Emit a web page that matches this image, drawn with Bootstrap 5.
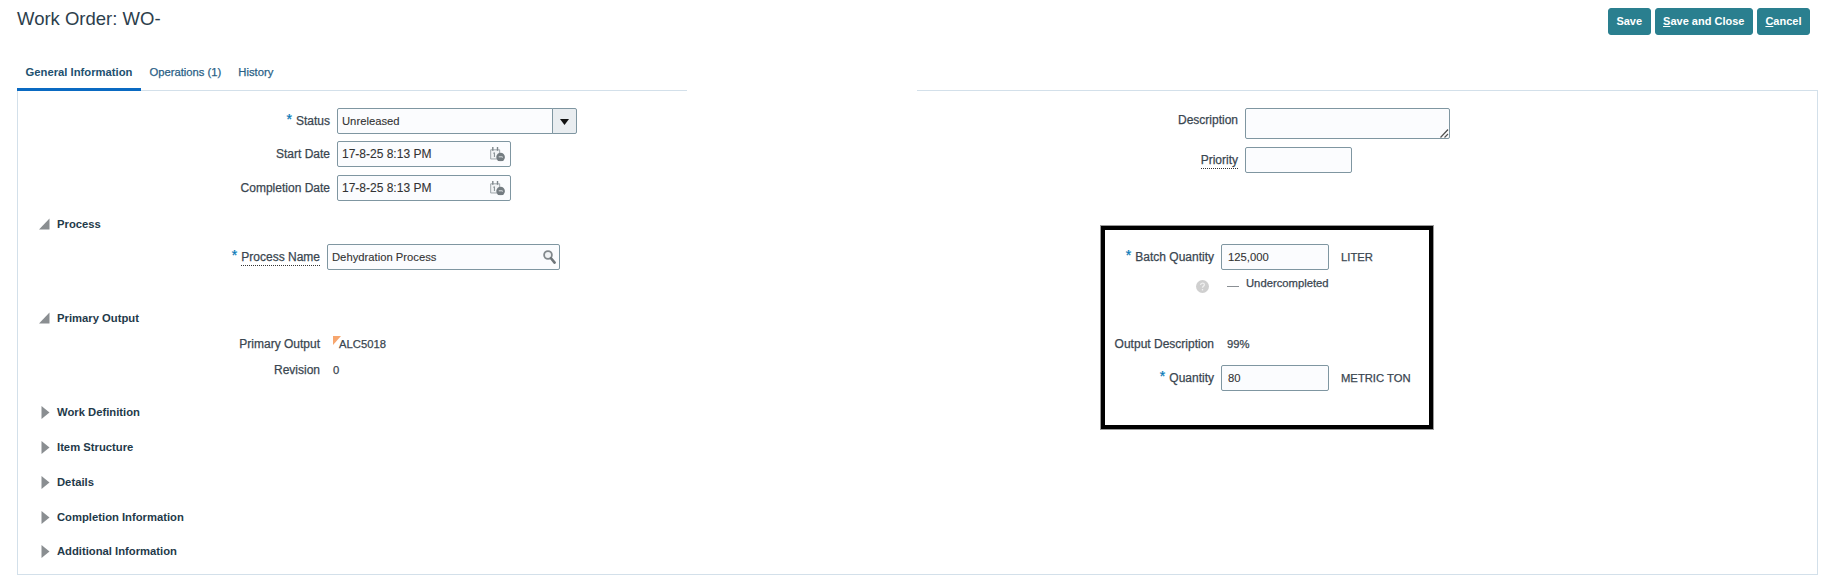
<!DOCTYPE html>
<html lang="en">
<head>
    <meta charset="UTF-8">
    <title>Work Order</title>
    <link href="https://cdn.jsdelivr.net/npm/bootstrap@5.3.3/dist/css/bootstrap.min.css" rel="stylesheet">
    <style>
        body {
            background: #fff;
            font-family: "Liberation Sans", Arial, sans-serif;
            font-size: 12px;
            color: #3a4650;
            -webkit-text-stroke: 0.25px;
        }

        .page-head {
            height: 54px;
            padding: 8px 27px 0 17px;
        }

        .page-title {
            font-size: 18.5px;
            font-weight: 400;
            line-height: 22px;
            margin: 0;
            color: #2c3e4c;
            -webkit-text-stroke: 0;
        }

        .act-btn {
            background: #2a7f8f;
            border: 1px solid #2a7f8f;
            border-radius: 3px;
            color: #fff;
            font-size: 11px;
            font-weight: 700;
            height: 27px;
            padding: 0 7.5px;
            -webkit-text-stroke: 0;
        }

        .act-btn:hover {
            background: #236d7b;
            color: #fff;
        }

        .form-wrap {
            margin: 0 19px 0 17px;
        }

        .tab-bar {
            height: 37px;
        }

        .tab-line {
            border-bottom: 1px solid #d3e0ea;
        }

        .tab-left {
            width: 670px;
        }

        .tab-gap {
            width: 230px;
        }

        .tab-right {
            flex: 1;
        }

        .tab-link {
            color: #2a5f86;
            font-size: 11.25px;
            padding: 0 8.5px;
            height: 37px;
            line-height: 36px;
        }

        .tab-link.on {
            color: #22506f;
            font-weight: 700;
            border-bottom: 3px solid #0a6ac2;
            margin-bottom: -1px;
            -webkit-text-stroke: 0;
        }

        .form-panel {
            border: 1px solid #d3e0ea;
            border-top: 0;
            padding: 17px 0 13px;
        }

        .col-left {
            width: 900px;
        }

        .frow {
            display: flex;
            align-items: center;
            gap: 7px;
        }

        .flabel {
            text-align: right;
            flex: none;
        }

        .w-top {
            width: 312px;
        }

        .w-proc {
            width: 302px;
        }

        .w-desc {
            width: 320px;
        }

        .w-box {
            width: 109px;
        }

        .req {
            color: #0a7ab8;
            font-size: 14px;
            line-height: 1;
            margin-right: 4px;
            vertical-align: 1px;
        }

        .dotted {
            border-bottom: 1px dotted #333;
            padding-bottom: 1px;
        }

        .fld {
            height: 26px;
            font-size: 11.25px;
            color: #333;
            background: #fbfcfe;
            border: 1px solid #7f96a1;
            border-radius: 2px;
            padding: 0 4px;
            box-shadow: none;
            -webkit-text-stroke: 0.1px;
        }

        .fld-date {
            width: 174px;
            font-size: 12px;
            padding-right: 26px;
        }

        .drop-btn {
            width: 25px;
            height: 26px;
            padding: 0;
            background: #e9edf0;
            border: 1px solid #7f96a1;
            border-radius: 0 2px 2px 0;
            margin-left: -1px;
        }

        .status-grp {
            width: 240px;
            flex-wrap: nowrap;
        }

        .ico-over {
            position: absolute;
            top: 50%;
            transform: translateY(-50%);
        }

        .ico-date {
            right: 6px;
        }

        .ico-find {
            right: 4px;
        }

        .ico-grip {
            position: absolute;
            right: 1px;
            bottom: 1px;
            pointer-events: none;
        }

        textarea.fld-area {
            width: 205px;
            height: 31px;
            min-height: 31px;
            padding: 4px;
        }

        .desc-lbl {
            margin-top: 3px;
        }

        .fld-search {
            width: 233px;
            padding-right: 24px;
        }

        .fld-pri {
            width: 107px;
        }

        .fld-qty {
            width: 108px;
            padding: 0 6px;
        }

        .unit {
            font-size: 11.25px;
            margin-left: 5px;
        }

        .sec-head {
            height: 20px;
            display: flex;
            align-items: center;
            color: #1f3a4a;
            font-size: 11.25px;
            font-weight: 700;
            padding-left: 21px;
            -webkit-text-stroke: 0;
        }

        .sec-ico {
            width: 18px;
            flex: none;
        }

        .gap-7 {
            margin-top: 7px;
        }

        .gap-8 {
            margin-top: 8px;
        }

        .gap-10 {
            margin-top: 10px;
        }

        .gap-11 {
            margin-top: 11px;
        }

        .h-1 {
            margin-top: 13px;
        }

        .h-2 {
            margin-top: 38px;
        }

        .h-3 {
            margin-top: 22px;
        }

        .h-4 {
            margin-top: 15px;
        }

        .h-5 {
            margin-top: 14px;
        }

        .read-row {
            height: 20px;
            margin-top: 6px;
        }

        .read-far {
            margin-top: 38px;
        }

        .read-val {
            font-size: 11.25px;
            margin-left: 6px;
        }

        .flag {
            margin: -8px -2px 0 0;
            flex: none;
        }

        .mark-box {
            border: 5px solid #000;
            margin: 52px 0 0 182px;
            width: 334px;
            padding: 14px 0 34px;
            outline: 1px solid #999;
            outline-offset: -1px;
        }

        .note-row {
            height: 20px;
            margin-top: 6px;
        }

        .note-ico {
            padding-right: 5px;
        }

        .dash {
            width: 12px;
            height: 1px;
            background: #8a8f94;
            margin-right: 7px;
            flex: none;
        }

        .note-txt {
            font-size: 11.25px;
            margin-top: -6px;
        }
    </style>
</head>

<body>
    <div class="page-head d-flex justify-content-between align-items-start">
        <h1 class="page-title">Work Order: WO-</h1>
        <div class="d-flex gap-1">
            <button class="btn act-btn">Save</button>
            <button class="btn act-btn"><u>S</u>ave and Close</button>
            <button class="btn act-btn"><u>C</u>ancel</button>
        </div>
    </div>

    <div class="form-wrap">
        <div class="tab-bar d-flex">
            <div class="tab-line tab-left nav">
                <a class="nav-link tab-link on" href="#">General Information</a>
                <a class="nav-link tab-link" href="#">Operations (1)</a>
                <a class="nav-link tab-link" href="#">History</a>
            </div>
            <div class="tab-gap"></div>
            <div class="tab-line tab-right"></div>
        </div>

        <div class="form-panel d-flex">
            <div class="col-left">
                <div class="frow">
                    <div class="flabel w-top"><span class="req">*</span>Status</div>
                    <div class="input-group status-grp">
                        <input class="form-control fld" value="Unreleased">
                        <button class="btn drop-btn" type="button">
                            <svg width="9" height="6" viewBox="0 0 9 6"><path d="M0 0h9L4.5 6z" fill="#111"/></svg>
                        </button>
                    </div>
                </div>
                <div class="frow gap-7">
                    <div class="flabel w-top">Start Date</div>
                    <div class="position-relative">
                        <input class="form-control fld fld-date" value="17-8-25 8:13 PM">
                        <svg class="ico-over ico-date" width="15" height="15" viewBox="0 0 16 16"><use href="#cal-clock"/></svg>
                    </div>
                </div>
                <div class="frow gap-8">
                    <div class="flabel w-top">Completion Date</div>
                    <div class="position-relative">
                        <input class="form-control fld fld-date" value="17-8-25 8:13 PM">
                        <svg class="ico-over ico-date" width="15" height="15" viewBox="0 0 16 16"><use href="#cal-clock"/></svg>
                    </div>
                </div>

                <div class="sec-head h-1">
                    <svg class="sec-ico" width="18" height="12" viewBox="0 0 18 12"><path d="M0 11.5L10.5 .5v11z" fill="#8a8e91"/></svg>
                    <span>Process</span>
                </div>
                <div class="frow gap-10">
                    <div class="flabel w-proc"><span class="req">*</span><span class="dotted">Process Name</span></div>
                    <div class="position-relative">
                        <input class="form-control fld fld-search" value="Dehydration Process">
                        <svg class="ico-over ico-find" width="13" height="14" viewBox="0 0 13 14">
                            <circle cx="5" cy="5" r="3.9" fill="#f1f3f5" stroke="#83898d" stroke-width="1.8"/>
                            <path d="M8 8.2l3.6 4.4" stroke="#6f767a" stroke-width="2.6" stroke-linecap="round"/>
                        </svg>
                    </div>
                </div>

                <div class="sec-head h-2">
                    <svg class="sec-ico" width="18" height="12" viewBox="0 0 18 12"><path d="M0 11.5L10.5 .5v11z" fill="#8a8e91"/></svg>
                    <span>Primary Output</span>
                </div>
                <div class="frow read-row">
                    <div class="flabel w-proc">Primary Output</div>
                    <div class="d-flex align-items-center read-val">
                        <svg class="flag" width="8" height="9" viewBox="0 0 8 9"><path d="M0 0h8L0 9z" fill="#f7a66e"/></svg>
                        <span>ALC5018</span>
                    </div>
                </div>
                <div class="frow read-row">
                    <div class="flabel w-proc">Revision</div>
                    <span class="read-val">0</span>
                </div>

                <div class="sec-head h-3"><svg class="sec-ico" width="18" height="13" viewBox="0 0 18 13"><path d="M2.5 0l8 6.5-8 6.5z" fill="#8a8e91"/></svg><span>Work Definition</span></div>
                <div class="sec-head h-4"><svg class="sec-ico" width="18" height="13" viewBox="0 0 18 13"><path d="M2.5 0l8 6.5-8 6.5z" fill="#8a8e91"/></svg><span>Item Structure</span></div>
                <div class="sec-head h-4"><svg class="sec-ico" width="18" height="13" viewBox="0 0 18 13"><path d="M2.5 0l8 6.5-8 6.5z" fill="#8a8e91"/></svg><span>Details</span></div>
                <div class="sec-head h-4"><svg class="sec-ico" width="18" height="13" viewBox="0 0 18 13"><path d="M2.5 0l8 6.5-8 6.5z" fill="#8a8e91"/></svg><span>Completion Information</span></div>
                <div class="sec-head h-5"><svg class="sec-ico" width="18" height="13" viewBox="0 0 18 13"><path d="M2.5 0l8 6.5-8 6.5z" fill="#8a8e91"/></svg><span>Additional Information</span></div>
            </div>

            <div class="flex-grow-1">
                <div class="frow align-items-start">
                    <div class="flabel w-desc desc-lbl">Description</div>
                    <div class="position-relative">
                        <textarea class="form-control fld fld-area"></textarea>
                        <svg class="ico-grip" width="10" height="10" viewBox="0 0 10 10">
                            <path d="M1.5 9.5L9 1.5M5.5 9.5L9 6" stroke="#555" stroke-width="1.2" fill="none"/>
                        </svg>
                    </div>
                </div>
                <div class="frow gap-8">
                    <div class="flabel w-desc"><span class="dotted">Priority</span></div>
                    <input class="form-control fld fld-pri">
                </div>

                <div class="mark-box">
                    <div class="frow">
                        <div class="flabel w-box"><span class="req">*</span>Batch Quantity</div>
                        <input class="form-control fld fld-qty" value="125,000">
                        <span class="unit">LITER</span>
                    </div>
                    <div class="frow note-row">
                        <div class="flabel w-box d-flex justify-content-end note-ico">
                            <svg width="13" height="13" viewBox="0 0 13 13">
                                <circle cx="6.5" cy="6.5" r="6.5" fill="#cfcfcf"/>
                                <path d="M4.6 5c0-2.4 3.8-2.4 3.8-.2 0 1.3-1.9 1.4-1.9 2.9M6.5 9v1.4" fill="none" stroke="#eee" stroke-width="1.3"/>
                            </svg>
                        </div>
                        <div class="d-flex align-items-center read-val">
                            <span class="dash"></span>
                            <span class="note-txt">Undercompleted</span>
                        </div>
                    </div>
                    <div class="frow read-row read-far">
                        <div class="flabel w-box">Output Description</div>
                        <span class="read-val">99%</span>
                    </div>
                    <div class="frow gap-11">
                        <div class="flabel w-box"><span class="req">*</span>Quantity</div>
                        <input class="form-control fld fld-qty" value="80">
                        <span class="unit">METRIC TON</span>
                    </div>
                </div>
            </div>
        </div>
    </div>

    <svg width="0" height="0" class="position-absolute">
        <symbol id="cal-clock" viewBox="0 0 16 16">
            <path d="M.7 3.5h9.6v9.8H.7z" fill="#f1f3f5" stroke="#9aa1a6"/>
            <path d="M3 .5v4M8 .5v4" stroke="#7d858a" stroke-width="1.5"/>
            <path d="M3.5 7.2l1.2-.6v4.6" fill="none" stroke="#7d858a"/>
            <circle cx="11.3" cy="11.3" r="4.6" fill="#747c81"/>
            <path d="M9.3 11h3.6l1 .8" stroke="#e8ebed" fill="none"/>
        </symbol>
    </svg>

    <script src="https://cdn.jsdelivr.net/npm/bootstrap@5.3.3/dist/js/bootstrap.bundle.min.js"></script>
</body>
</html>
